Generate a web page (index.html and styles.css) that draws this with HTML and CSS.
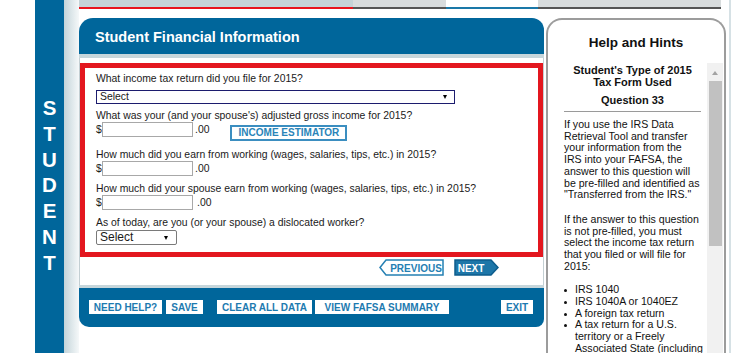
FILE: index.html
```html
<!DOCTYPE html>
<html lang="en">
<head>
    <meta charset="UTF-8">
    <title>Student Financial Information</title>
    <link rel="stylesheet" href="styles.css">
</head>
<body>
    <div class="gutter"></div>
    <div class="side">
        <div class="side-label">
            <span>S</span><span>T</span><span>U</span><span>D</span><span>E</span><span>N</span><span>T</span>
        </div>
    </div>
    <div class="shade"></div>

    <div class="page">
        <div class="tabs">
            <div class="tab tab-done"></div>
            <div class="tab tab-grey"></div>
            <div class="tab tab-current"></div>
            <div class="tab tab-grey tab-last"></div>
        </div>

        <div class="main">
            <div class="form-panel">
                <div class="panel-head">Student Financial Information</div>
                <div class="panel-body">
                    <div class="question-box">
                        <div class="q q-first">
                            <label>What income tax return did you file for 2015?</label>
                            <div class="select select-wide">Select<span class="arrow"></span></div>
                        </div>
                        <div class="q q-second">
                            <label for="agi">What was your (and your spouse's) adjusted gross income for 2015?</label>
                            <div class="amount-row amount-tall">
                                <span class="dollar">$</span>
                                <input type="text" id="agi">
                                <span class="cents">.00</span>
                                <a href="#" class="estimator">INCOME ESTIMATOR</a>
                            </div>
                        </div>
                        <div class="q">
                            <label for="earned">How much did you earn from working (wages, salaries, tips, etc.) in 2015?</label>
                            <div class="amount-row">
                                <span class="dollar">$</span>
                                <input type="text" id="earned">
                                <span class="cents">.00</span>
                            </div>
                        </div>
                        <div class="q">
                            <label for="spouseEarned">How much did your spouse earn from working (wages, salaries, tips, etc.) in 2015?</label>
                            <div class="amount-row">
                                <span class="dollar">$</span>
                                <input type="text" id="spouseEarned">
                                <span class="cents cents-wide">.00</span>
                            </div>
                        </div>
                        <div class="q q-last">
                            <label>As of today, are you (or your spouse) a dislocated worker?</label>
                            <div class="select select-small">Select<span class="arrow"></span></div>
                        </div>
                    </div>

                    <div class="nav">
                        <svg class="nav-btn" width="65" height="17" viewBox="0 0 65 17">
                            <polygon points="7,1 64,1 64,16 7,16 1,8.5" fill="#fff" stroke="#2580b3" stroke-width="1.5"/>
                            <text x="37" y="12.5" text-anchor="middle" class="nav-text">PREVIOUS</text>
                        </svg>
                        <svg class="nav-btn" width="45" height="17" viewBox="0 0 45 17">
                            <polygon points="1,1 37,1 44,8.5 37,16 1,16" fill="#1d76a8" stroke="#0d5c8c" stroke-width="1.5"/>
                            <text x="17" y="12.5" text-anchor="middle" class="nav-text nav-text-on">NEXT</text>
                        </svg>
                    </div>
                </div>
                <div class="panel-foot">
                    <a href="#" class="foot-btn btn-help">NEED HELP?</a>
                    <a href="#" class="foot-btn btn-save">SAVE</a>
                    <a href="#" class="foot-btn btn-clear">CLEAR ALL DATA</a>
                    <a href="#" class="foot-btn btn-summary">VIEW FAFSA SUMMARY</a>
                    <a href="#" class="foot-btn btn-exit">EXIT</a>
                </div>
            </div>

            <div class="help-panel">
                <h3>Help and Hints</h3>
                <div class="help-scroll">
                    <div class="help-content">
                        <h4>Student's Type of 2015<br>Tax Form Used</h4>
                        <h4 class="help-q">Question 33</h4>
                        <hr>
                        <p>If you use the IRS Data Retrieval Tool and transfer your information from the IRS into your FAFSA, the answer to this question will be pre-filled and identified as "Transferred from the IRS."</p>
                        <p class="p-last">If the answer to this question is not pre-filled, you must select the income tax return that you filed or will file for 2015:</p>
                        <ul>
                            <li>IRS 1040</li>
                            <li>IRS 1040A or 1040EZ</li>
                            <li>A foreign tax return</li>
                            <li>A tax return for a U.S. territory or a Freely Associated State (including Puerto Rico, Guam, American Samoa, the U.S. Virgin Islands, the Marshall Islands, the Federated States of Micronesia or Palau)</li>
                        </ul>
                    </div>
                    <div class="scrollbar">
                        <div class="scroll-up"></div>
                        <div class="thumb"></div>
                    </div>
                </div>
            </div>
        </div>
    </div>

    <div class="vline"></div>
</body>
</html>
```

FILE: styles.css
```css
body {
    margin: 0;
    height: 353px;
    overflow: hidden;
    display: flex;
    background-color: #fff;
    font-family: "Liberation Sans", Arial, sans-serif;
    color: #1a1a1a;
}

/* left side strip */
.gutter {
    width: 35px;
    flex-shrink: 0;
}
.side {
    width: 29px;
    flex-shrink: 0;
    background-color: #00669b;
    color: #fff;
}
.side-label {
    padding-top: 95px;
    text-align: center;
    font-weight: bold;
    font-size: 20.5px;
    line-height: 25.8px;
}
.side-label span {
    display: block;
}
.shade {
    width: 15px;
    flex-shrink: 0;
    background: linear-gradient(to right, #c3d4d9, #dfe8eb 55%, #f5f8f9);
}
.page {
    width: 650px;
    flex-shrink: 0;
}
.vline {
    width: 2px;
    flex-shrink: 0;
    background-color: #d6e1e5;
}

/* tabs */
.tabs {
    display: flex;
    height: 9px;
}
.tab {
    height: 7px;
    border-bottom: 2px solid #555;
}
.tab-done {
    width: 274px;
    background-color: #c5d3d7;
    border-bottom-color: #e8141c;
}
.tab-grey {
    width: 93px;
    background-color: #d8dcdd;
}
.tab-current {
    width: 92px;
    background-color: #fff;
    border-bottom-color: #1a78a8;
}
.tab-last {
    width: 183px;
}

.main {
    display: flex;
    margin-top: 9px;
}

/* form panel */
.form-panel {
    width: 465px;
}
.panel-head {
    height: 36px;
    line-height: 38px;
    padding-left: 16px;
    background-color: #00669b;
    border-radius: 14px 12px 0 0;
    color: #fff;
    font-weight: bold;
    font-size: 14.5px;
    border-bottom: 4px solid #c6d6db;
}
.panel-body {
    background-color: #fff;
    border-left: 1px solid #c3cfd3;
    border-right: 1px solid #c3cfd3;
    padding-top: 5px;
}
.question-box {
    box-sizing: border-box;
    height: 194px;
    border: 5px solid #e3171f;
    padding: 5px 0 0 11px;
    font-size: 10.4px;
}
.q label {
    display: block;
    line-height: 12px;
}
.q-first + .q {
    margin-top: 6px;
}
.select {
    box-sizing: border-box;
    display: flex;
    justify-content: space-between;
    align-items: center;
    background-color: #fff;
}
.select-wide {
    margin-top: 5px;
    width: 359px;
    height: 14px;
    border: 1px solid #1c1c6e;
    padding: 0 7px 0 3px;
    line-height: 12px;
}
.select-small {
    margin-top: 1px;
    width: 81px;
    height: 15px;
    border: 1px solid #7a7a7a;
    border-radius: 2px;
    padding: 0 8px 0 3px;
    font-size: 12px;
    line-height: 13px;
}
.arrow {
    width: 0;
    height: 0;
    border-left: 2.5px solid transparent;
    border-right: 2.5px solid transparent;
    border-top: 4px solid #000;
}
.amount-row {
    display: flex;
    align-items: flex-start;
    height: 15px;
    margin-bottom: 7px;
    line-height: 15px;
}
.amount-tall {
    height: 19px;
    margin-bottom: 8px;
}
.dollar {
    width: 6px;
}
.amount-row input {
    box-sizing: border-box;
    width: 91px;
    height: 15px;
    margin: 0;
    padding: 0 2px;
    border: 1px solid #a8a8a8;
    font-size: 10.4px;
}
.cents {
    margin-left: 2px;
}
.cents-wide {
    margin-left: 4px;
}
.estimator {
    box-sizing: border-box;
    display: block;
    margin: 3px 0 0 21px;
    width: 117px;
    height: 16px;
    border: 2px solid #3b8ec0;
    text-align: center;
    line-height: 12px;
    font-weight: bold;
    font-size: 10px;
    color: #2a84b8;
    text-decoration: none;
}

.nav {
    display: flex;
    justify-content: flex-end;
    gap: 10px;
    height: 26px;
    padding: 2px 44px 0 0;
}
.nav-text {
    font-family: "Liberation Sans", Arial, sans-serif;
    font-weight: bold;
    font-size: 10px;
    fill: #2580b3;
}
.nav-text-on {
    fill: #fff;
}

.panel-foot {
    display: flex;
    align-items: flex-start;
    height: 27px;
    padding: 12px 11px 0 10px;
    background-color: #00669b;
    border-top: 3px solid #c6d6db;
    border-radius: 0 0 8px 10px;
}
.foot-btn {
    display: block;
    height: 14px;
    line-height: 15px;
    background-color: #fff;
    color: #1d7ab0;
    text-align: center;
    text-decoration: none;
    font-weight: bold;
    font-size: 10px;
}
.btn-help { width: 73px; }
.btn-save { width: 37px; margin-left: 4px; }
.btn-clear { width: 95px; margin-left: 14px; }
.btn-summary { width: 134px; margin-left: 3px; }
.btn-exit { width: 32px; margin-left: auto; }

/* help panel */
.help-panel {
    box-sizing: border-box;
    width: 180px;
    height: 345px;
    margin-left: 2px;
    border: 2px solid #9c9c9c;
    border-bottom: none;
    border-radius: 16px 16px 0 0;
    background-color: #fff;
}
.help-panel h3 {
    margin: 15px 0 12px;
    text-align: center;
    font-size: 13.5px;
    line-height: 16px;
    color: #111;
}
.help-scroll {
    display: flex;
    height: 290px;
}
.help-content {
    box-sizing: border-box;
    width: 159px;
    padding: 2px 6px 0 16px;
    overflow: hidden;
    font-size: 10.6px;
    line-height: 11.7px;
    color: #111;
}
.help-content h4 {
    margin: 0;
    text-align: center;
    font-size: 11px;
}
.help-content .help-q {
    margin-top: 6.6px;
}
.help-content hr {
    margin: 4.3px 0 7px;
    border: none;
    border-top: 1px solid #9a9a9a;
}
.help-content p {
    margin: 0 0 13px;
}
.help-content .p-last {
    margin-bottom: 11.7px;
}
.help-content ul {
    margin: 0 -4px 0 0;
    padding: 0;
    list-style: none;
}
.help-content li {
    display: flex;
}
.help-content li::before {
    content: "";
    flex-shrink: 0;
    width: 3px;
    height: 3px;
    margin: 5px 8px 0 0;
    border-radius: 50%;
    background-color: #111;
}
.scrollbar {
    width: 16px;
    background-color: #f1f1f1;
}
.scroll-up {
    width: 0;
    height: 0;
    margin: 8px auto 0;
    border-left: 3.5px solid transparent;
    border-right: 3.5px solid transparent;
    border-bottom: 4px solid #a3a3a3;
}
.thumb {
    margin: 6px 1px 0 2px;
    height: 165px;
    background-color: #c1c1c1;
}
```
